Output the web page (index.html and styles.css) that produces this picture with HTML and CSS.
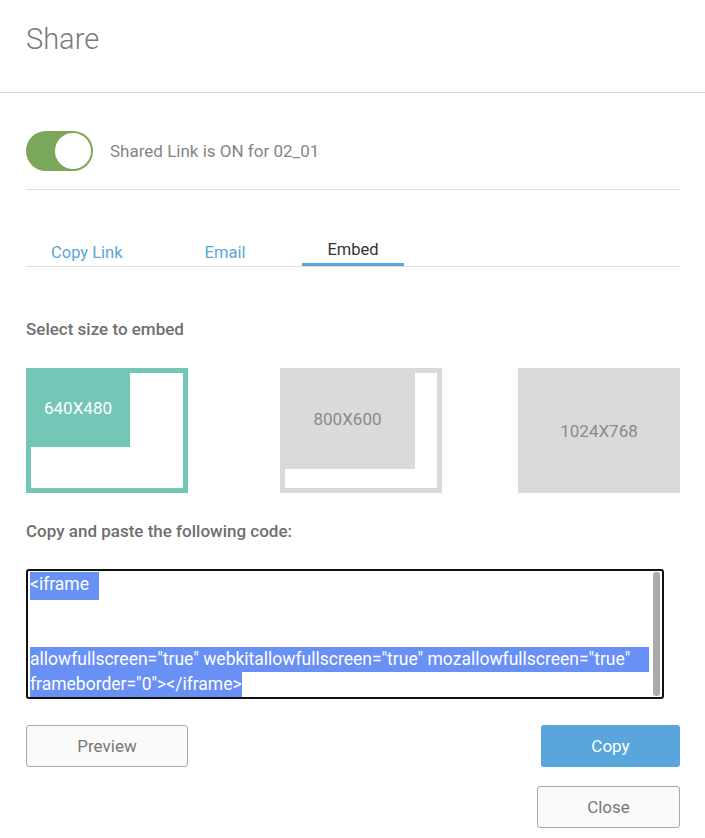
FILE: index.html
```html
<!DOCTYPE html>
<html lang="en">
<head>
  <meta charset="UTF-8">
  <meta name="viewport" content="width=device-width, initial-scale=1.0">
  <title>Share</title>
  <link rel="stylesheet" href="styles.css">
</head>
<body>

<header class="modal-header">
  <h1>Share</h1>
</header>

<div class="modal-body">
  <!-- Shared link switch -->
  <div class="share-toggle">
    <div class="switch"><div class="knob"></div></div>
    <span class="switch-label">Shared Link is ON for 02_01</span>
  </div>

  <!-- Tabs -->
  <div class="tabs">
    <div class="tab">Copy Link</div>
    <div class="tab">Email</div>
    <div class="tab active">Embed</div>
  </div>

  <h2 class="section-title">Select size to embed</h2>

  <div class="size-list">
    <div class="size-box selected size-640">
      <div class="size-fill">640X480</div>
    </div>
    <div class="size-box size-800">
      <div class="size-fill">800X600</div>
    </div>
    <div class="size-box size-1024">
      <div class="size-fill">1024X768</div>
    </div>
  </div>

  <h2 class="section-title code-title">Copy and paste the following code:</h2>

  <div class="code-box">
    <div class="code-text">
      <div class="line"><span class="sel sel-first">&lt;iframe </span></div>
      <div class="line"></div>
      <div class="line"></div>
      <div class="line"><span class="sel sel-long">allowfullscreen="true" webkitallowfullscreen="true" mozallowfullscreen="true" </span></div>
      <div class="line"><span class="sel">frameborder="0"&gt;&lt;/iframe&gt;</span></div>
    </div>
    <div class="scrollbar"></div>
  </div>

  <div class="actions">
    <button class="btn">Preview</button>
    <button class="btn btn-primary">Copy</button>
  </div>
  <div class="actions actions-end">
    <button class="btn btn-close">Close</button>
  </div>
</div>

</body>
</html>
```

FILE: styles.css
```css
body {
  font-family: Roboto, 'Noto Sans', sans-serif;
  margin: 0;
  padding: 0;
  background-color: #ffffff;
  color: #777777;
}

.modal-header {
  height: 93px;
  border-bottom: 1px solid #d9d9d9;
  box-sizing: border-box;
  padding: 22px 26px 0;
}

.modal-header h1 {
  margin: 0;
  font-size: 29px;
  font-weight: 300;
  line-height: 34px;
  color: #7a7a7a;
}

.modal-body {
  padding: 0 25px 0 26px;
}

.share-toggle {
  display: flex;
  align-items: center;
  margin-top: 38px;
  padding-bottom: 18px;
  border-bottom: 1px solid #dddddd;
}

.switch {
  width: 67px;
  height: 40px;
  border-radius: 20px;
  background-color: #7ba75a;
  display: flex;
  align-items: center;
  justify-content: flex-end;
  padding-right: 2px;
  box-sizing: border-box;
}

.switch .knob {
  width: 36px;
  height: 36px;
  border-radius: 50%;
  background-color: #ffffff;
}

.switch-label {
  margin-left: 17px;
  font-size: 17px;
  color: #858585;
}

.tabs {
  display: flex;
  align-items: flex-end;
  gap: 32px;
  margin-top: 50px;
  border-bottom: 1px solid #dddddd;
}

.tab {
  padding: 0 25px 3px;
  font-size: 16.5px;
  line-height: 20px;
  color: #5aa6d9;
}

.tab.active {
  color: #333333;
  border-bottom: 3px solid #5aa6d9;
}

.section-title {
  margin: 52px 0 0;
  font-size: 17px;
  font-weight: 500;
  line-height: 20px;
  color: #6f6f6f;
}

.code-title {
  margin-top: 28px;
}

.size-list {
  display: flex;
  justify-content: space-between;
  margin-top: 29px;
}

.size-box {
  width: 162px;
  height: 125px;
  box-sizing: border-box;
  border: 5px solid #dadada;
  background-color: #ffffff;
}

.size-box.selected {
  border-color: #74c6b6;
}

.size-800 {
  margin-left: 16px;
}

.size-fill {
  margin: -5px 0 0 -5px;
  display: flex;
  align-items: center;
  justify-content: center;
  background-color: #dadada;
  font-size: 17px;
  color: #8a8a8a;
}

.selected .size-fill {
  background-color: #74c6b6;
  color: #ffffff;
}

.size-640 .size-fill {
  width: 104px;
  height: 79px;
}

.size-800 .size-fill {
  width: 135px;
  height: 101px;
}

.size-1024 .size-fill {
  width: 162px;
  height: 125px;
}

.code-box {
  display: flex;
  margin-top: 28px;
  width: 638px;
  height: 130px;
  box-sizing: border-box;
  border: 2px solid #111111;
  border-radius: 3px;
  padding: 1px 2px 1px 2px;
}

.code-text {
  flex: 1;
  font-size: 17.5px;
  line-height: 25px;
  color: #ffffff;
}

.line {
  height: 25px;
}

.sel {
  display: inline-block;
  height: 25px;
  background-color: #6890f5;
  white-space: pre;
}

.sel-first {
  width: 69px;
  height: 28px;
}

.sel-long {
  width: 619px;
}

.scrollbar {
  width: 7px;
  margin-left: 2px;
  border-radius: 3px;
  background-color: #ababab;
}

.actions {
  display: flex;
  justify-content: space-between;
  margin-top: 26px;
}

.actions-end {
  justify-content: flex-end;
  margin-top: 19px;
}

.btn {
  width: 162px;
  height: 42px;
  border: 1px solid #a8a8a8;
  border-radius: 3px;
  background-color: #fafafa;
  font-family: Roboto, 'Noto Sans', sans-serif;
  font-size: 17px;
  color: #777777;
  cursor: pointer;
}

.btn-primary {
  width: 139px;
  border: none;
  background-color: #58a6dc;
  color: #ffffff;
}

.btn-close {
  width: 143px;
}
```
